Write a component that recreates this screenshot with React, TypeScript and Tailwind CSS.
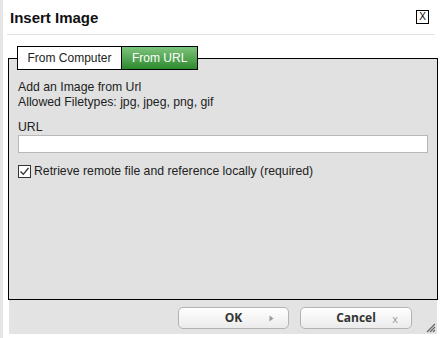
import { useState } from "react";

type TabKey = "computer" | "url";

export default function App() {
  const [tab, setTab] = useState<TabKey>("url");
  const [url, setUrl] = useState("");
  const [retrieve, setRetrieve] = useState(true);

  return (
    <div className="flex w-[444px] h-[338px] bg-white text-[#222] font-['Liberation_Sans',Arial,sans-serif] text-[12px]">
      <div className="w-[3px] h-full bg-[#e6e6e6]" />

      <div className="flex flex-col w-[436px]">
        {/* header */}
        <div className="flex items-center justify-between h-[35px] mx-[4px] border-b border-[#e2e2e2]">
          <div className="pl-[3px] text-[15px] font-bold text-[#111] leading-none">Insert Image</div>
          <button className="flex items-center justify-center w-[13px] h-[14px] mr-[6px] border border-black text-[10px] leading-none text-black">
            X
          </button>
        </div>

        {/* tabs + panel */}
        <div className="ml-[5px] mt-[11px] w-[430px]">
          <div className="relative z-10 flex h-[24px] pl-[9px]">
            <button
              onClick={() => setTab("computer")}
              className={[
                "h-[24px] px-[9.5px] border border-black text-[12px]",
                tab === "computer"
                  ? "bg-gradient-to-b from-[#7cc47c] to-[#2c8a2c] text-white"
                  : "bg-white text-[#222]",
              ].join(" ")}
            >
              From Computer
            </button>
            <button
              onClick={() => setTab("url")}
              className={[
                "h-[24px] px-[10px] border border-l-0 border-black text-[12px]",
                tab === "url"
                  ? "bg-gradient-to-b from-[#7cc47c] to-[#2c8a2c] text-white"
                  : "bg-white text-[#222]",
              ].join(" ")}
            >
              From URL
            </button>
          </div>

          <div className="-mt-[12px] h-[242px] border border-black bg-[#e1e1e1] pt-[21px] pl-[9px] pr-[9px] text-[12.25px] leading-[15px]">
            <div>Add an Image from Url</div>
            <div>Allowed Filetypes: jpg, jpeg, png, gif</div>

            <div className="mt-[10px]">URL</div>
            <input
              value={url}
              onChange={(e) => setUrl(e.target.value)}
              className="block w-[410px] h-[18px] border border-[#b8b8b8] bg-white px-[3px] outline-none"
            />

            <label className="mt-[11px] flex items-center gap-[3px]">
              <span
                onClick={() => setRetrieve(!retrieve)}
                className="flex items-center justify-center w-[13px] h-[13px] border border-[#333] bg-white"
              >
                {retrieve && (
                  <svg width="11" height="11" viewBox="0 0 11 11">
                    <path d="M1.5 5.5 L4.3 8.3 L9.5 2" fill="none" stroke="#333" strokeWidth="1.3" />
                  </svg>
                )}
              </span>
              <span>Retrieve remote file and reference locally (required)</span>
            </label>
          </div>
        </div>

        {/* footer */}
        <div className="relative ml-[6px] w-[428px] h-[34px] bg-[#e3e3e3] flex items-start justify-end gap-[11px] pt-[7px] pr-[25px] font-['Open_Sans',Arial,sans-serif]">
          <button className="relative flex items-center justify-center w-[111px] h-[22px] rounded-[5px] border border-[#b3b3b3] bg-gradient-to-b from-white to-[#ebebeb] text-[12px] font-bold text-[#333]">
            OK
            <svg className="absolute right-[14px] top-[7px]" width="5" height="7" viewBox="0 0 5 7">
              <path d="M0.5 0.5 L4.5 3.5 L0.5 6.5 Z" fill="#999" />
            </svg>
          </button>
          <button className="relative flex items-center justify-center w-[112px] h-[22px] rounded-[5px] border border-[#b3b3b3] bg-gradient-to-b from-white to-[#ebebeb] text-[12px] font-bold text-[#333]">
            Cancel
            <span className="absolute right-[13px] top-[3px] text-[11px] font-normal text-[#999]">x</span>
          </button>

          <svg className="absolute right-[1px] bottom-[1px]" width="10" height="10" viewBox="0 0 10 10">
            <path d="M9 1 L1 9 M9 4 L4 9 M9 7 L7 9" stroke="#666" strokeWidth="1.2" />
          </svg>
        </div>
      </div>
    </div>
  );
}
